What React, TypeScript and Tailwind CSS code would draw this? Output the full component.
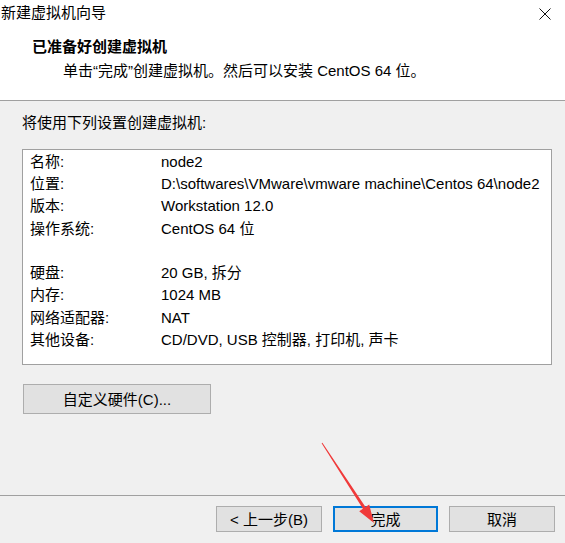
import React from 'react';

const rows: [string, string][] = [
  ['名称:', 'node2'],
  ['位置:', 'D:\\softwares\\VMware\\vmware machine\\Centos 64\\node2'],
  ['版本:', 'Workstation 12.0'],
  ['操作系统:', 'CentOS 64 位'],
  ['', ''],
  ['硬盘:', '20 GB, 拆分'],
  ['内存:', '1024 MB'],
  ['网络适配器:', 'NAT'],
  ['其他设备:', 'CD/DVD, USB 控制器, 打印机, 声卡'],
];

function Arrow() {
  return (
    <svg className="absolute inset-0 pointer-events-none" width="565" height="543" viewBox="0 0 565 543">
      <polygon
        points="321.6,443.3 322.4,442.7 365.5,507.1 369.2,504.6 374,523 359.2,511.2 362.9,508.7"
        fill="#f03a3a"
      />
    </svg>
  );
}

function WinButton({ label, primary }: { label: string; primary?: boolean }) {
  return (
    <button
      className={
        primary
          ? 'w-[105px] h-[26px] bg-[#e1e1e1] border-2 border-[#0078d7] text-[15px] leading-none text-black'
          : 'w-[106px] h-[26px] bg-[#e1e1e1] border border-[#adadad] text-[15px] leading-none text-black'
      }
    >
      {label}
    </button>
  );
}

export default function App() {
  return (
    <div
      className="relative w-[565px] h-[543px] bg-[#f0f0f0] flex flex-col text-black overflow-hidden"
      style={{ fontFamily: '"Liberation Sans", "Noto Sans CJK SC", sans-serif' }}
    >
      {/* header */}
      <div className="h-[100px] bg-white shrink-0">
        <div className="h-[27px] flex items-center justify-between">
          <span className="text-[15px] pl-[1px]">新建虚拟机向导</span>
          <svg className="mr-[14px]" width="12" height="12" viewBox="0 0 12 12">
            <path d="M0.5 0.5 L11.5 11.5 M11.5 0.5 L0.5 11.5" stroke="#111" strokeWidth="1" />
          </svg>
        </div>
        <div className="pl-[32px] mt-[9px] text-[15px] leading-[22px] font-bold">已准备好创建虚拟机</div>
        <div className="pl-[63px] mt-[2px] text-[15px] leading-[22px]">
          单击“完成”创建虚拟机。然后可以安装 CentOS 64 位。
        </div>
      </div>
      <div className="h-px bg-[#a0a0a0] shrink-0" />

      {/* body */}
      <div className="flex-1 px-[22px] pt-[11px]">
        <div className="text-[15px] leading-[22px]">将使用下列设置创建虚拟机:</div>
        <div className="mt-[15px] w-[530px] h-[216px] bg-white border border-[#a0a0a0] pl-[7px] pt-[1px]">
          {rows.map(([k, v], i) => (
            <div key={i} className="flex h-[22.25px] items-center text-[15px]">
              <span className="w-[131px] shrink-0">{k}</span>
              <span className="whitespace-nowrap">{v}</span>
            </div>
          ))}
        </div>
        <button className="mt-[19px] ml-px w-[188px] h-[30px] bg-[#e1e1e1] border border-[#adadad] text-[15px] leading-none">
          自定义硬件(C)...
        </button>
      </div>

      {/* footer */}
      <div className="h-px bg-[#a0a0a0] shrink-0" />
      <div className="h-[47px] shrink-0 flex justify-end items-start pt-[10px] pr-[10px] gap-[11px]">
        <WinButton label="< 上一步(B)" />
        <WinButton label="完成" primary />
        <WinButton label="取消" />
      </div>

      <Arrow />
    </div>
  );
}
